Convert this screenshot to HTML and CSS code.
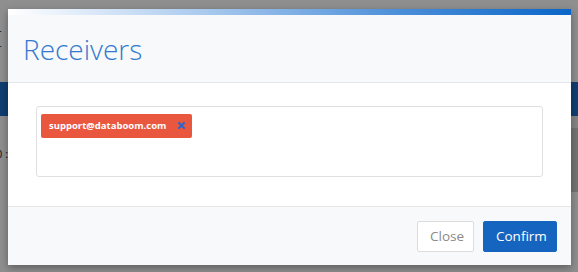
FILE: index.html
```html
<!DOCTYPE html>
<html>
<head>
<meta charset="utf-8">
<link rel="stylesheet" href="styles.css">
</head>
<body>
<div class="page">
  <div class="bg-marks">
    <span class="mark m1">-</span>
    <span class="mark m2">-</span>
    <span class="mark m3">0 :</span>
  </div>
  <div class="band"></div>
  <div class="band-under"></div>
  <div class="band-dark"></div>
  <div class="backdrop"></div>
  <div class="modal">
    <div class="topbar"></div>
    <div class="header">
      <h1 class="title">Receivers</h1>
    </div>
    <div class="body">
      <div class="tagbox">
        <span class="tag">support@databoom.com<svg class="tag-x" width="7" height="7" viewBox="0 0 7 7"><path d="M1 1L6 6M6 1L1 6" stroke="#2f66c4" stroke-width="2" stroke-linecap="square"/></svg></span>
      </div>
    </div>
    <div class="footer">
      <button class="btn btn-close">Close</button>
      <button class="btn btn-confirm">Confirm</button>
    </div>
  </div>
</div>
</body>
</html>
```

FILE: styles.css
```css
html, body {
  margin: 0;
  padding: 0;
  width: 578px;
  height: 272px;
  overflow: hidden;
  font-family: "Open Sans", "Liberation Sans", sans-serif;
}
.page {
  position: relative;
  width: 578px;
  height: 272px;
  background: #ffffff;
}
.bg-marks .mark {
  position: absolute;
  font-size: 11px;
  line-height: 11px;
  color: #222;
}
.m1 { left: -2px; top: 24px; }
.m2 { left: -2px; top: 39px; }
.m3 { left: -4px; top: 148px; }
.band {
  position: absolute;
  left: 0; right: 0;
  top: 82px; height: 34px;
  background: #1f6fc9;
}
.band-under {
  position: absolute;
  right: 0; width: 20px;
  top: 116px; height: 12px;
  background: #eeeeee;
}
.band-dark {
  position: absolute;
  right: 0; width: 20px;
  top: 128px; height: 64px;
  background: #cfcfcf;
}
.backdrop {
  position: absolute;
  inset: 0;
  background: rgba(0, 0, 0, 0.44);
}
.modal {
  position: absolute;
  left: 8px;
  top: 9px;
  width: 563px;
  height: 256px;
  background: #fff;
  display: flex;
  flex-direction: column;
  box-shadow: 0 3px 8px rgba(0, 0, 0, 0.35);
}
.topbar {
  height: 6px;
  background: linear-gradient(90deg, #ffffff 0%, #a9c9ee 35%, #4a8ed8 70%, #0a66c8 100%);
}
.header {
  height: 67px;
  background: #f7f9fb;
  border-bottom: 1px solid #e3e5e8;
  display: flex;
  align-items: center;
  padding: 0 15px;
}
.title {
  margin: 0;
  font-weight: 300;
  font-size: 28px;
  color: #3479cf;
  line-height: 1;
  margin-top: 1px;
}
.body {
  height: 123px;
  padding: 23px 28px 0 28px;
  box-sizing: border-box;
}
.tagbox {
  height: 71px;
  border: 1px solid #e0e0e0;
  border-radius: 3px;
  box-sizing: border-box;
  padding: 5px 4px;
}
.tag {
  display: inline-flex;
  align-items: center;
  height: 24px;
  padding: 0 7px 0 8px;
  background: #e9573f;
  color: #fff;
  font-size: 9.5px;
  font-weight: 700;
  border-radius: 2px;
}
.tag-x {
  display: block;
  margin-left: 12px;
}
.footer {
  flex: 1;
  background: #f7f9fb;
  border-top: 1px solid #e5e6e8;
  display: flex;
  justify-content: flex-end;
  align-items: center;
  padding: 0 14px 0 0;
  gap: 9px;
}
.btn {
  font-family: "Open Sans", "Liberation Sans", sans-serif;
  font-size: 13.5px;
  height: 31px;
  border-radius: 2px;
  padding: 0 12px;
  margin-top: 0;
}
.btn-close {
  background: #fff;
  border: 1px solid #dddddd;
  color: #8a8a8a;
  width: 57px;
}
.btn-confirm {
  background: #1565c0;
  border: 1px solid #1565c0;
  color: #fff;
  width: 74px;
}
```
